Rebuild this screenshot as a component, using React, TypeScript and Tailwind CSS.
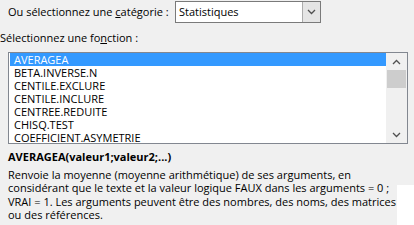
import React from 'react';

const functions = [
  'AVERAGEA',
  'BETA.INVERSE.N',
  'CENTILE.EXCLURE',
  'CENTILE.INCLURE',
  'CENTREE.REDUITE',
  'CHISQ.TEST',
  'COEFFICIENT.ASYMETRIE',
];

function Chevron({ up }: { up?: boolean }) {
  return (
    <svg width="9" height="6" viewBox="0 0 9 6" className="block">
      <path
        d={up ? 'M1 5 L4.5 1.5 L8 5' : 'M1 1 L4.5 4.5 L8 1'}
        fill="none"
        stroke="#505050"
        strokeWidth="1.3"
      />
    </svg>
  );
}

export default function App() {
  return (
    <div className="relative w-[414px] h-[225px] overflow-hidden bg-[#f0f0f0] text-black font-['Open_Sans',sans-serif] text-[11px] leading-[13px]">
      <div className="flex items-center h-[23px] pl-[8px]">
        <span className="w-[167px]">
          Ou sélectionnez une <span className="underline">c</span>atégorie :
        </span>
        <div className="flex h-[22px] w-[146px] border border-[#7a7a7a] bg-white">
          <span className="flex-1 pl-[3px] flex items-center">Statistiques</span>
          <span className="w-[18px] flex items-center justify-center bg-[#e5e5e5] border-l border-[#acacac]">
            <Chevron />
          </span>
        </div>
      </div>

      <div className="mt-[8px] h-[14px]">
        Sélectionnez une fo<span className="underline">n</span>ction :
      </div>

      <div className="ml-[8px] mt-[7px] flex w-[400px] h-[92px] border border-[#828790] bg-white">
        <ul className="flex-1 overflow-hidden pl-[1px]">
          {functions.map((name, i) => (
            <li
              key={name}
              className={
                i === 0
                  ? 'h-[13px] pl-[4px] bg-[#3399ff] text-white'
                  : 'h-[13px] pl-[4px]'
              }
            >
              {name}
            </li>
          ))}
        </ul>
        <div className="w-[21px] flex flex-col bg-[#f0f0f0]">
          <div className="h-[17px] flex items-center justify-center">
            <Chevron up />
          </div>
          <div className="mx-[1px] h-[18px] bg-[#cdcdcd]" />
          <div className="flex-1" />
          <div className="h-[17px] flex items-center justify-center">
            <Chevron />
          </div>
        </div>
      </div>

      <div className="pl-[8px] mt-[6px] font-bold h-[14px]">AVERAGEA(valeur1;valeur2;...)</div>
      <p className="pl-[8px] mt-[4px] w-[400px] leading-[13.3px]">
        Renvoie la moyenne (moyenne arithmétique) de ses arguments, en
        <br />
        considérant que le texte et la valeur logique FAUX dans les arguments = 0 ;
        <br />
        VRAI = 1. Les arguments peuvent être des nombres, des noms, des matrices
        <br />
        ou des références.
      </p>

      <div className="absolute right-0 bottom-0 w-[17px] h-[40px] bg-white" />
    </div>
  );
}
